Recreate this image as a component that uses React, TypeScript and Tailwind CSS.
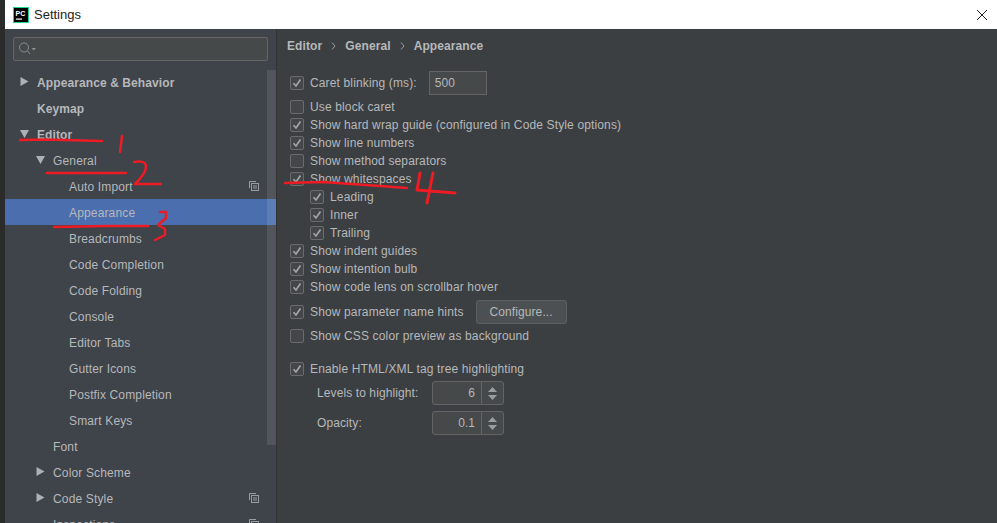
const font = { fontFamily: '"Liberation Sans", Arial, sans-serif' };

function Arrow({ open }: { open?: boolean }) {
  return (
    <svg width="9" height="9" viewBox="0 0 9 9" className="shrink-0">
      {open ? <path d="M0 1H9L4.500 9Z" fill="#aeb1b3" /> : <path d="M0.500 0V9L8.500 4.500Z" fill="#aeb1b3" />}
    </svg>
  );
}

function CopyIcon() {
  return (
    <svg width="10" height="10" viewBox="0 0 10 10" fill="none" stroke="#9a9da0" strokeWidth="1" className="shrink-0">
      <path d="M0.500 7V0.500H7" />
      <rect x="2.500" y="2.500" width="7" height="7" />
      <path d="M4 5H8M4 7H8" />
    </svg>
  );
}

type Row = { label: string; level: 0 | 1 | 2; arrow?: "open" | "closed"; bold?: boolean; selected?: boolean; copy?: boolean };

const rows: Row[] = [
  { label: "Appearance & Behavior", level: 0, arrow: "closed", bold: true },
  { label: "Keymap", level: 0, bold: true },
  { label: "Editor", level: 0, arrow: "open", bold: true },
  { label: "General", level: 1, arrow: "open" },
  { label: "Auto Import", level: 2, copy: true },
  { label: "Appearance", level: 2, selected: true },
  { label: "Breadcrumbs", level: 2 },
  { label: "Code Completion", level: 2 },
  { label: "Code Folding", level: 2 },
  { label: "Console", level: 2 },
  { label: "Editor Tabs", level: 2 },
  { label: "Gutter Icons", level: 2 },
  { label: "Postfix Completion", level: 2 },
  { label: "Smart Keys", level: 2 },
  { label: "Font", level: 1 },
  { label: "Color Scheme", level: 1, arrow: "closed" },
  { label: "Code Style", level: 1, arrow: "closed", copy: true },
  { label: "Inspections", level: 1, copy: true },
];

function TreeRow({ r }: { r: Row }) {
  const pad = r.level === 0 ? "pl-[32px]" : r.level === 1 ? "pl-[48px]" : "pl-[64px]";
  const arrowPos = r.level === 0 ? "left-[15px]" : "left-[31px]";
  return (
    <div className={`relative flex h-[26px] shrink-0 items-center pr-[17px] text-[12px] ${pad} ${r.selected ? "bg-[#4b6eaf]" : ""} ${r.bold ? "font-bold tracking-[0.1px]" : "tracking-[0.15px]"}`}>
      {r.arrow && (
        <span className={`absolute top-[8px] ${arrowPos}`}>
          <Arrow open={r.arrow === "open"} />
        </span>
      )}
      <span className="flex-1 pt-[2px]">{r.label}</span>
      {r.copy && <CopyIcon />}
    </div>
  );
}

function Check({ on = true }: { on?: boolean }) {
  return (
    <span className="flex h-[14px] w-[14px] shrink-0 items-center justify-center rounded-[2px] border border-[#6b6b6b] bg-[#43474a]">
      {on && (
        <svg width="10" height="10" viewBox="0 0 10 10" fill="none">
          <path d="M1.500 5.200L4 8L8.500 1.500" stroke="#a3a6a8" strokeWidth="1.700" />
        </svg>
      )}
    </span>
  );
}

function CheckRow({ label, on = true, indent, className = "h-[18px]" }: { label: string; on?: boolean; indent?: boolean; className?: string }) {
  return (
    <div className={`flex items-center ${indent ? "pl-[20px]" : ""} ${className}`}>
      <Check on={on} />
      <span className="ml-[6px] tracking-[0.14px]">{label}</span>
    </div>
  );
}

function Spinner({ value }: { value: string }) {
  return (
    <div className="flex h-[24px] w-[72px] rounded-[3px] border border-[#646464] bg-[#45494a]">
      <span className="flex flex-1 items-center justify-end pr-[6px]">{value}</span>
      <span className="flex w-[22px] flex-col items-center justify-center gap-[3px] border-l border-[#646464]">
        <svg width="9" height="5" viewBox="0 0 9 5"><path d="M0 5L4.500 0L9 5Z" fill="#9a9da0" /></svg>
        <svg width="9" height="5" viewBox="0 0 9 5"><path d="M0 0L4.500 5L9 0Z" fill="#9a9da0" /></svg>
      </span>
    </div>
  );
}

function Sep() {
  return (
    <svg width="5" height="8" viewBox="0 0 5 8" fill="none" className="mx-[9px]">
      <path d="M1 0.500L4 4L1 7.500" stroke="#9a9da0" />
    </svg>
  );
}

export default function App() {
  return (
    <div style={font} className="relative flex h-[523px] w-[997px] overflow-hidden bg-[#2b2b2b] text-[12px] text-[#b6b8ba]">
      <div className="ml-[5px] flex min-w-0 flex-1 flex-col">
        <header className="flex h-[29px] shrink-0 items-center bg-white pl-[8px] pr-[5px] text-[#222]">
          <svg width="16" height="16" viewBox="0 0 16 16" className="shrink-0">
            <rect width="16" height="16" fill="#21d789" />
            <rect x="1" y="1" width="14" height="14" fill="#000" />
            <rect x="3" y="11.500" width="6" height="1.200" fill="#fff" />
            <text x="2.600" y="8.800" fontSize="7" fontWeight="700" fill="#fff" fontFamily="Liberation Sans">PC</text>
          </svg>
          <span className="ml-[5px] flex-1 text-[13px]">Settings</span>
          <svg width="12" height="12" viewBox="0 0 12 12" stroke="#222" strokeWidth="1" className="mr-[4px]">
            <path d="M1 1L11 11M11 1L1 11" />
          </svg>
        </header>
        <div className="flex min-h-0 flex-1">
          <aside className="relative flex w-[272px] shrink-0 flex-col border-r border-[#323232] bg-[#3f434a]">
            <div className="px-[8px] pt-[8px] pb-[8px]">
              <div className="flex h-[24px] items-center rounded-[2px] border border-[#646464] bg-[#45494a] pl-[4px]">
                <svg width="20" height="14" viewBox="0 0 20 14" fill="none" stroke="#8b8e90">
                  <circle cx="6" cy="5.500" r="4.500" />
                  <path d="M9.500 9L12 12" />
                  <path d="M13.500 6H18L15.750 8.500Z" fill="#8b8e90" stroke="none" />
                </svg>
              </div>
            </div>
            <div className="flex flex-col">
              {rows.map((r) => (
                <TreeRow key={r.label + r.level} r={r} />
              ))}
            </div>
            <div className="absolute left-[262px] top-[41px] h-[375px] w-[9px] bg-[#ffffff]/10" />
          </aside>
          <main className="min-w-0 flex-1 bg-[#3c3f41] pl-[10px]">
            <nav className="flex h-[33px] items-center font-bold tracking-[0.1px]">
              <span>Editor</span>
              <Sep />
              <span>General</span>
              <Sep />
              <span>Appearance</span>
            </nav>
            <div className="flex flex-col pl-[3px] pt-[9px]">
              <div className="flex h-[24px] items-center">
                <Check />
                <span className="ml-[6px] tracking-[0.14px]">Caret blinking (ms):</span>
                <span className="ml-[12px] flex h-[24px] w-[58px] items-center border border-[#646464] bg-[#45494a] pl-[5px]">500</span>
              </div>
              <CheckRow label="Use block caret" on={false} className="mt-[3px] h-[18px]" />
              <CheckRow label="Show hard wrap guide (configured in Code Style options)" />
              <CheckRow label="Show line numbers" />
              <CheckRow label="Show method separators" on={false} />
              <CheckRow label="Show whitespaces" />
              <CheckRow label="Leading" indent />
              <CheckRow label="Inner" indent />
              <CheckRow label="Trailing" indent />
              <CheckRow label="Show indent guides" />
              <CheckRow label="Show intention bulb" />
              <CheckRow label="Show code lens on scrollbar hover" />
              <div className="mt-[4px] flex h-[24px] items-center">
                <Check />
                <span className="ml-[6px] tracking-[0.14px]">Show parameter name hints</span>
                <button className="ml-[12px] h-[24px] w-[91px] rounded-[3px] border border-[#5e6060] bg-[#4c5052] text-[12px] tracking-[0.1px] text-[#b6b8ba]">Configure...</button>
              </div>
              <CheckRow label="Show CSS color preview as background" on={false} className="mt-[3px] h-[18px]" />
              <CheckRow label="Enable HTML/XML tag tree highlighting" className="mt-[15px] h-[18px]" />
              <div className="mt-[3px] flex h-[24px] items-center pl-[27px]">
                <span className="w-[115px] tracking-[0.1px]">Levels to highlight:</span>
                <Spinner value="6" />
              </div>
              <div className="mt-[6px] flex h-[24px] items-center pl-[27px]">
                <span className="w-[115px] tracking-[0.1px]">Opacity:</span>
                <Spinner value="0.1" />
              </div>
            </div>
          </main>
        </div>
      </div>

      <svg width="997" height="523" viewBox="0 0 997 523" fill="none" stroke="#ed1c24" strokeWidth="2.500" strokeLinecap="round" strokeLinejoin="round" className="pointer-events-none absolute left-0 top-0">
        <path d="M20 140L45 139.500L102 141" />
        <path d="M122 136L120 152" />
        <path d="M47 173L126 173" />
        <path d="M134 162C140 161 146 161 146 167C146 172 140 179 135 184L161 184" />
        <path d="M54 227L105 226L148 226" />
        <path d="M160 212L166 212L166 218L158 225L165 229L165 235L155 240" />
        <path d="M285 183L323 182L380 186L407 188" />
        <path d="M420 173L417 190L455 193" strokeWidth="3" />
        <path d="M433 173L427 203" strokeWidth="3" />
      </svg>
    </div>
  );
}
